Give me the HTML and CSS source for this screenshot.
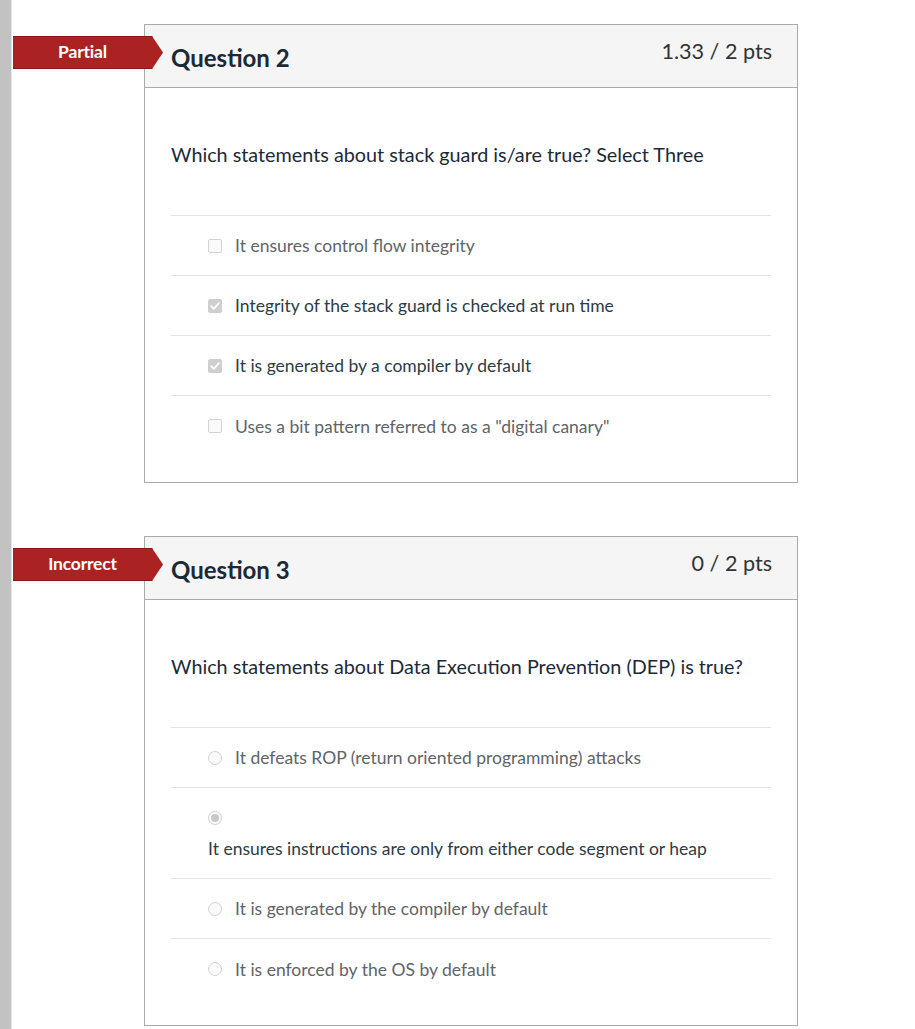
FILE: index.html
```html
<!DOCTYPE html>
<html>
<head>
<meta charset="utf-8">
<link rel="stylesheet" href="styles.css">
</head>
<body>
<div class="page">
  <div class="rail"></div>
  <div class="content">
    <div class="question">
      <div class="badge"><span>Partial</span></div>
      <div class="card">
        <div class="card-header">
          <h2 class="title">Question 2</h2>
          <div class="points">1.33 / 2 pts</div>
        </div>
        <div class="card-body">
          <div class="qtext">Which statements about stack guard is/are true? Select Three</div>
          <div class="answers">
            <div class="answer"><span class="check"></span><span class="atext muted">It ensures control flow integrity</span></div>
            <div class="answer"><span class="check checked"><svg viewBox="0 0 14 14" width="14" height="14"><path d="M3.2 7.2 L5.8 9.8 L10.8 4.2" fill="none" stroke="#fff" stroke-width="1.8" stroke-linecap="round" stroke-linejoin="round"/></svg></span><span class="atext">Integrity of the stack guard is checked at run time</span></div>
            <div class="answer"><span class="check checked"><svg viewBox="0 0 14 14" width="14" height="14"><path d="M3.2 7.2 L5.8 9.8 L10.8 4.2" fill="none" stroke="#fff" stroke-width="1.8" stroke-linecap="round" stroke-linejoin="round"/></svg></span><span class="atext">It is generated by a compiler by default</span></div>
            <div class="answer"><span class="check"></span><span class="atext muted">Uses a bit pattern referred to as a "digital canary"</span></div>
          </div>
        </div>
      </div>
    </div>

    <div class="question">
      <div class="badge"><span>Incorrect</span></div>
      <div class="card">
        <div class="card-header">
          <h2 class="title">Question 3</h2>
          <div class="points">0 / 2 pts</div>
        </div>
        <div class="card-body">
          <div class="qtext">Which statements about Data Execution Prevention (DEP) is true?</div>
          <div class="answers">
            <div class="answer"><span class="radio"></span><span class="atext muted">It defeats ROP (return oriented programming) attacks</span></div>
            <div class="answer stacked"><span class="radio selected"></span><span class="atext">It ensures instructions are only from either code segment or heap</span></div>
            <div class="answer"><span class="radio"></span><span class="atext muted">It is generated by the compiler by default</span></div>
            <div class="answer"><span class="radio"></span><span class="atext muted">It is enforced by the OS by default</span></div>
          </div>
        </div>
      </div>
    </div>
  </div>
</div>
</body>
</html>
```

FILE: styles.css
```css
html, body {
  margin: 0;
  padding: 0;
  background: #fff;
}
body {
  font-family: Lato, "Open Sans", "Liberation Sans", sans-serif;
  color: #2d3b45;
}
.page {
  display: flex;
  height: 1029px;
  overflow: hidden;
}
.rail {
  width: 11px;
  flex: none;
  background: #c2c2c2;
  border-right: 1px solid #e6e6e6;
}
.content {
  flex: 1;
  padding-top: 24px;
}
.question {
  position: relative;
  padding-left: 132px;
  margin-bottom: 53px;
}
.badge {
  position: absolute;
  left: 1px;
  top: 12px;
  width: 150px;
  height: 33px;
  background: #ab2222;
  border-top: 1px solid #8c1717;
  border-bottom: 1px solid #8c1717;
  box-sizing: border-box;
  clip-path: polygon(0 0, 139px 0, 150px 50%, 139px 100%, 0 100%);
  z-index: 2;
  display: flex;
  align-items: center;
}
.badge span {
  width: 139px;
  margin-top: -2px;
  text-align: center;
  color: #fff;
  font-weight: 700;
  font-size: 17.5px;
  letter-spacing: -0.2px;
}
.card {
  width: 654px;
  box-sizing: border-box;
  border: 1px solid #aaaaaa;
  background: #fff;
}
.card-header {
  display: flex;
  justify-content: space-between;
  align-items: flex-start;
  height: 62px;
  background: #f5f5f5;
  border-bottom: 1px solid #aaaaaa;
  padding: 0 25px 0 26px;
}
.title {
  margin: 0;
  padding-top: 18px;
  font-size: 24px;
  font-weight: 700;
  line-height: 30px;
  color: #1c2a36;
}
.points {
  padding-top: 12px;
  font-size: 21.6px;
  line-height: 28px;
  color: #333;
}
.card-body {
  padding: 0 26px 26px 26px;
}
.qtext {
  font-size: 19.8px;
  line-height: 26px;
  padding-top: 53px;
  padding-bottom: 48px;
  border-bottom: 1px solid #e4e4e4;
  color: #1c2a36;
}
.answer {
  display: flex;
  align-items: center;
  height: 60px;
  padding-left: 37px;
  font-size: 17.5px;
  border-bottom: 1px solid #e4e4e4;
  box-sizing: border-box;
}
.answer:last-child {
  border-bottom: none;
}
.answer.stacked {
  flex-direction: column;
  align-items: flex-start;
  justify-content: flex-start;
  height: 91px;
  padding-top: 23px;
}
.answer.stacked .radio {
  margin-bottom: 13px;
}
.atext {
  color: #2d3b45;
}
.atext.muted {
  color: #5f6468;
}
.check {
  width: 14px;
  height: 14px;
  box-sizing: border-box;
  border: 1px solid #d2d2d2;
  border-radius: 2px;
  background: #fafafa;
  margin-right: 13px;
  flex: none;
  display: flex;
}
.check.checked {
  background: #cfcfcf;
  border-color: #cfcfcf;
}
.check svg {
  display: block;
  margin: -1px;
}
.radio {
  width: 14px;
  height: 14px;
  box-sizing: border-box;
  border: 1px solid #d2d2d2;
  border-radius: 50%;
  background: #fafafa;
  margin-right: 13px;
  flex: none;
  display: flex;
  align-items: center;
  justify-content: center;
}
.radio.selected::after {
  content: "";
  width: 8px;
  height: 8px;
  border-radius: 50%;
  background: #c9c9c9;
}
```
